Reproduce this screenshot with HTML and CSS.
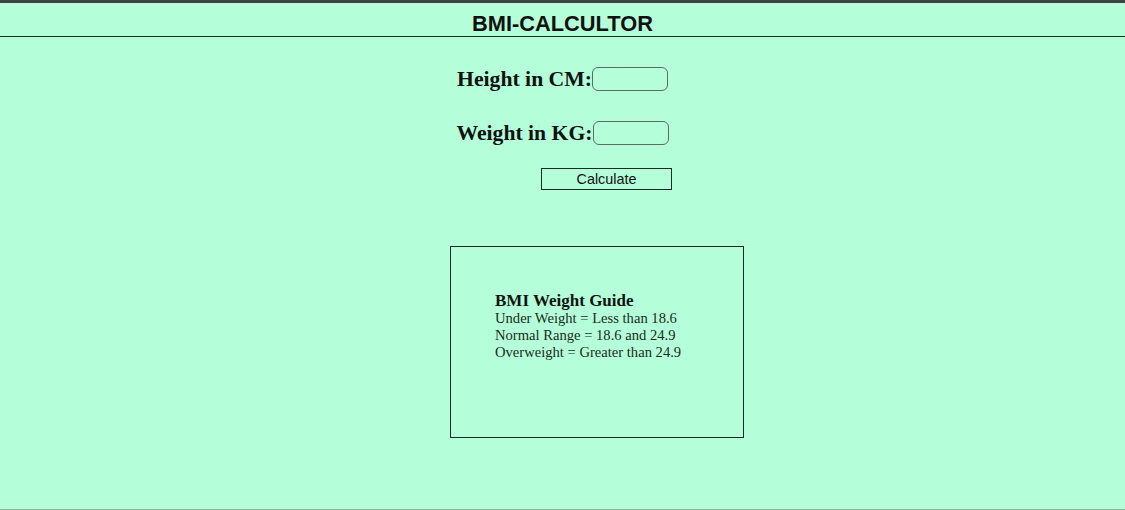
FILE: index.html
```html
<!DOCTYPE html>
<html lang="en">
<head>
<meta charset="utf-8">
<title>BMI-CALCULTOR</title>
<link rel="stylesheet" href="styles.css">
</head>
<body>
<header class="topbar">
  <h1 class="title">BMI-CALCULTOR</h1>
</header>
<main class="calc">
  <div class="row">
    <label class="label" for="height">Height in CM:</label>
    <input class="field" id="height" type="text">
  </div>
  <div class="row row-second">
    <label class="label" for="weight">Weight in KG:</label>
    <input class="field" id="weight" type="text">
  </div>
  <button class="btn" type="button">Calculate</button>
  <section class="guide">
    <h3 class="guide-title">BMI Weight Guide</h3>
    <p class="guide-line">Under Weight = Less than 18.6</p>
    <p class="guide-line">Normal Range = 18.6 and 24.9</p>
    <p class="guide-line">Overweight = Greater than 24.9</p>
  </section>
</main>
</body>
</html>
```
FILE: styles.css
```css
html, body {
  margin: 0;
  padding: 0;
}
body {
  min-height: 100vh;
  box-sizing: border-box;
  background: #b4fed9;
  border-top: 3px solid #3f4442;
  border-bottom: 1px solid #8cb7a0;
  color: #111;
}
.topbar {
  border-bottom: 1px solid #163322;
}
.title {
  margin: 0;
  padding-top: 8px;
  line-height: 25px;
  text-align: center;
  font-family: "Liberation Sans", Arial, sans-serif;
  font-weight: bold;
  font-size: 21.8px;
}
.calc {
  display: flex;
  flex-direction: column;
  align-items: center;
}
.row {
  display: flex;
  align-items: flex-start;
  margin-top: 30px;
}
.label {
  font-family: "Liberation Serif", "Times New Roman", serif;
  font-weight: bold;
  font-size: 21.7px;
  line-height: 24px;
}
.field {
  width: 76px;
  height: 24px;
  box-sizing: border-box;
  margin: 0;
  padding: 0 4px;
  border: 1px solid #5e6b63;
  border-radius: 6px;
  background: transparent;
  font-size: 13px;
}
.btn {
  margin: 23px 0 0 88px;
  width: 131px;
  height: 22px;
  box-sizing: border-box;
  padding: 0;
  border: 1px solid #1b2a22;
  background: transparent;
  color: #111;
  font-family: "Liberation Sans", Arial, sans-serif;
  font-size: 14.4px;
  line-height: 20px;
}
.guide {
  margin: 56px 0 0 69px;
  width: 294px;
  height: 192px;
  box-sizing: border-box;
  border: 1px solid #1b2a22;
  padding: 46px 44px 0;
  font-family: "Liberation Serif", "Times New Roman", serif;
}
.guide-title {
  margin: 0;
  font-size: 17px;
  line-height: 16.6px;
  font-weight: bold;
}
.guide-line {
  margin: 0;
  font-size: 14.6px;
  color: #1c2a22;
}
```
